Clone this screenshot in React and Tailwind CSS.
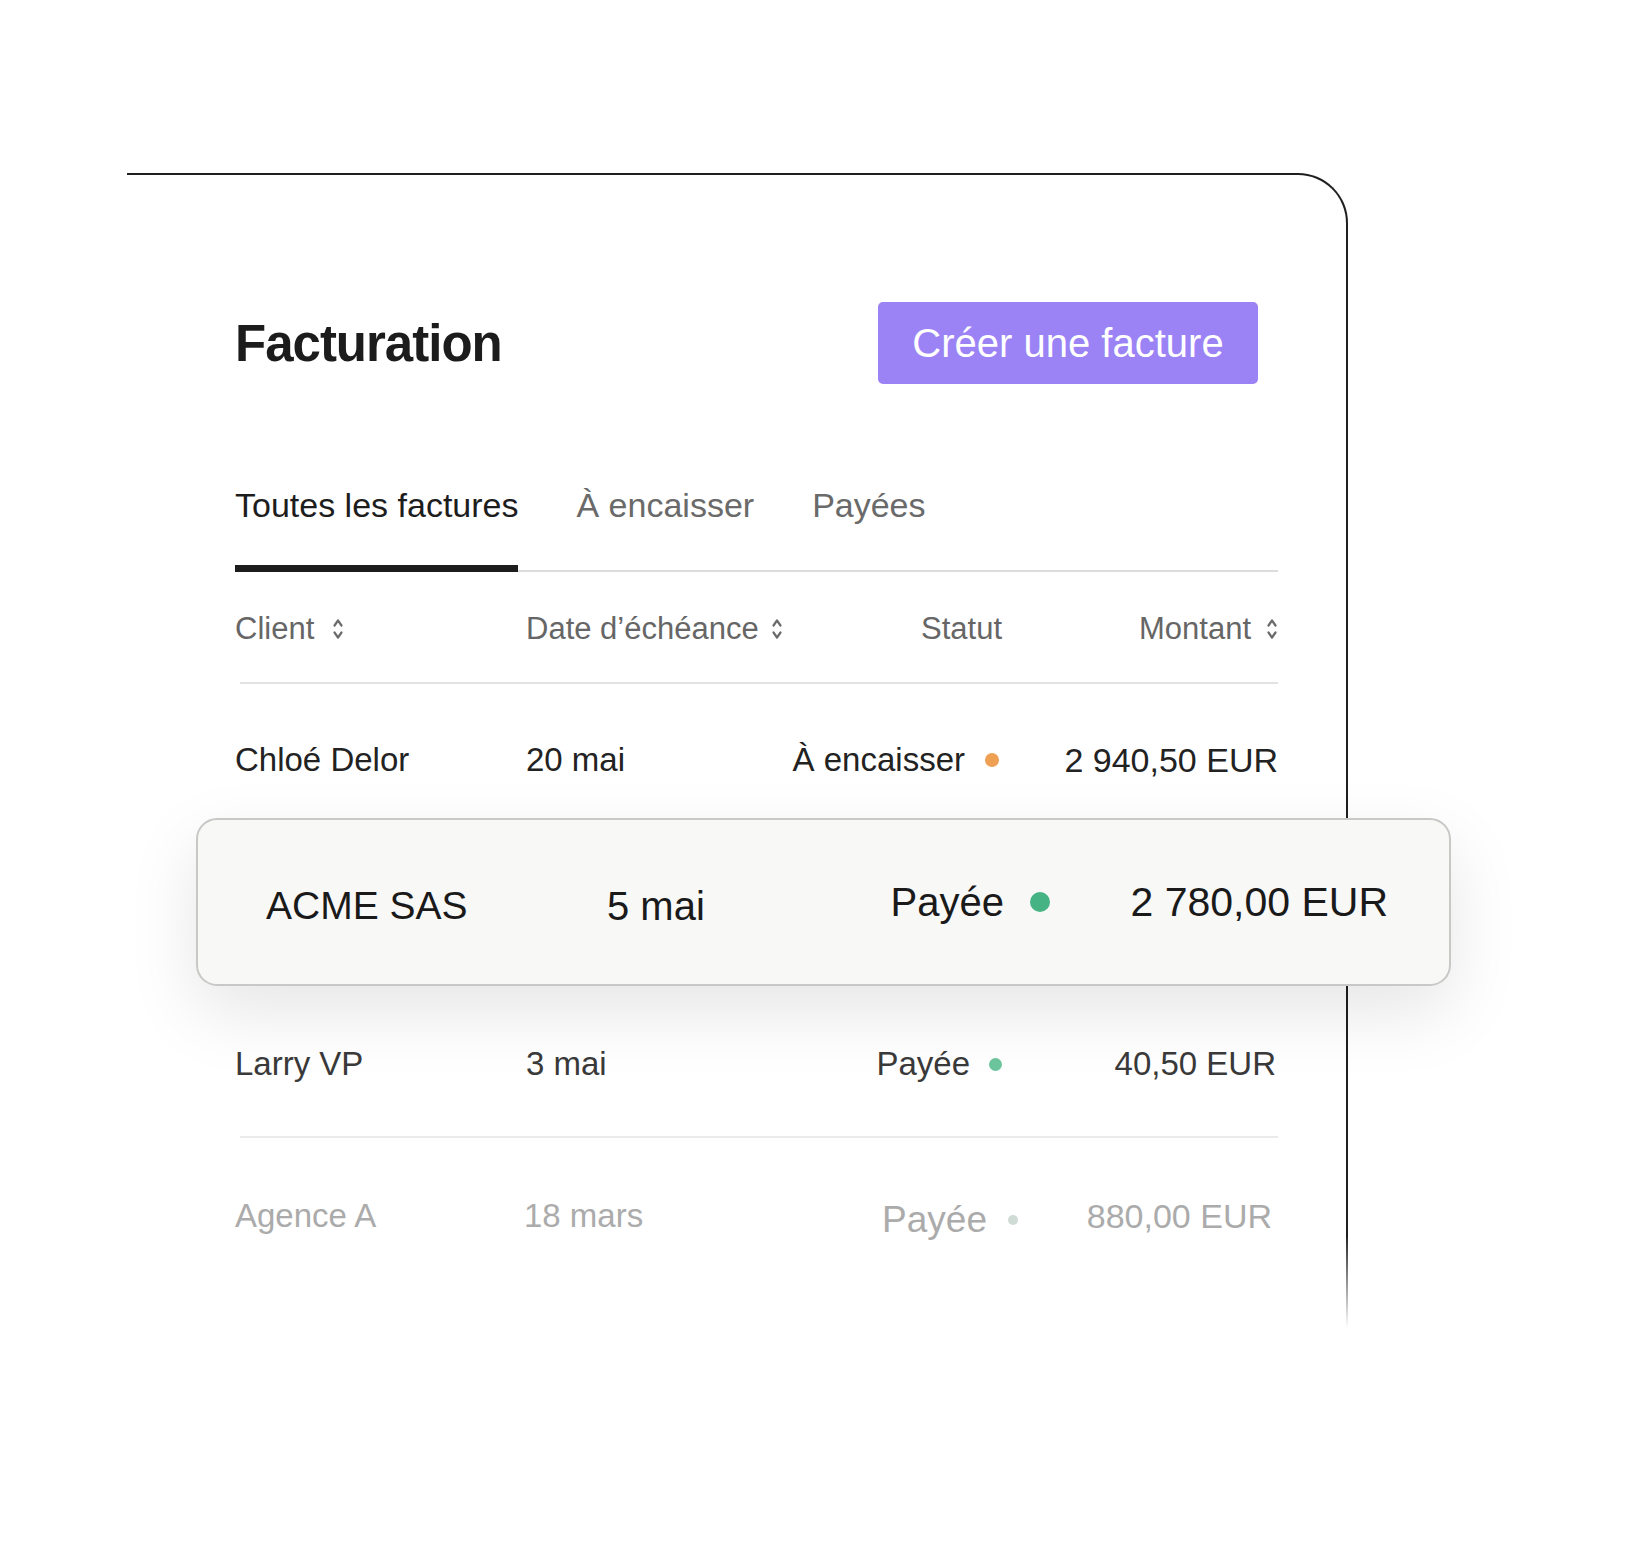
import React from "react";

function SortIcon() {
  return (
    <svg className="shrink-0" width="12" height="26" viewBox="0 0 12 26" fill="none" stroke="#6b6b6b" strokeWidth="2.2" strokeLinecap="round" strokeLinejoin="round">
      <path d="M2.5 9.5 6 4.5l3.5 5" />
      <path d="M2.5 16.5 6 21.5l3.5-5" />
    </svg>
  );
}

export default function App() {
  return (
    <div className="w-[1626px] h-[1548px] bg-white overflow-hidden font-['Liberation_Sans',Arial,sans-serif]">
      <div className="pt-[173px] pl-[127px]">
        <div className="w-[1221px] border-t-2 border-r-2 border-[#1f1f1f] rounded-tr-[50px] pl-[108px] pr-[68px]">
          {/* Title + button */}
          <div className="flex items-center justify-between pt-[127px]">
            <h1 className="text-[51px] font-bold leading-none tracking-[-1px] text-[#1c1c1c]">Facturation</h1>
            <button className="mr-[20px] w-[380px] h-[82px] rounded-[5px] bg-[#9b83f6] text-white text-[40px] leading-none flex items-center justify-center">
              Créer une facture
            </button>
          </div>

          {/* Tabs */}
          <div className="mt-[101px] flex gap-[58px] border-b-2 border-[#dcdcda] text-[34px] leading-[40px]">
            <div className="pb-[40px] border-b-[7px] border-[#1d1d1d] -mb-[2px] text-[#1d1d1d]">Toutes les factures</div>
            <div className="text-[#6a6a6a]">À encaisser</div>
            <div className="text-[#6a6a6a]">Payées</div>
          </div>

          {/* Header */}
          <div className="grid grid-cols-[291px_226px_250px_276px] items-center pt-[39px] pb-[35px] text-[31px] leading-[36px] text-[#666666]">
            <div className="flex items-center gap-[18px]">
              <span>Client</span>
              <SortIcon />
            </div>
            <div className="flex items-center gap-[12px] whitespace-nowrap">
              <span>Date d’échéance</span>
              <SortIcon />
            </div>
            <div className="flex justify-end">Statut</div>
            <div className="flex items-center justify-end gap-[15px]">
              <span>Montant</span>
              <SortIcon />
            </div>
          </div>
          <div className="h-[2px] bg-[#e2e2e0] ml-[5px]" />

          {/* Row 1 */}
          <div className="grid grid-cols-[291px_226px_250px_276px] items-center h-[152px] text-[33px] leading-[40px] text-[#222222]">
            <div>Chloé Delor</div>
            <div>20 mai</div>
            <div className="flex items-center justify-end gap-[20px] whitespace-nowrap mr-[3px]">
              <span>À encaisser</span>
              <span className="w-[14px] h-[14px] rounded-full bg-[#f0a052]" />
            </div>
            <div className="text-right whitespace-nowrap text-[34px]">2 940,50 EUR</div>
          </div>

          {/* Highlighted row */}
          <div className="relative z-10 -ml-[39px] -mr-[173px] -mt-[18px] h-[168px] rounded-[21px] border-2 border-[#c8c8c6] bg-[#f8f8f7] shadow-[0_26px_70px_rgba(0,0,0,0.10)] pl-[68px] pr-[64px] grid grid-cols-[341px_200px_245px_336px] items-center text-[40px] leading-[46px] text-[#1a1a1a]">
            <div className="mt-[8px] text-[39px] whitespace-nowrap">ACME SAS</div>
            <div className="mt-[8px]">5 mai</div>
            <div className="flex items-center justify-end gap-[26px] mr-[2px]">
              <span>Payée</span>
              <span className="w-[20px] h-[20px] rounded-full bg-[#45b384]" />
            </div>
            <div className="text-right whitespace-nowrap text-[41px]">2 780,00 EUR</div>
          </div>

          {/* Row 3 */}
          <div className="grid grid-cols-[291px_226px_250px_276px] items-center h-[150px] pt-[6px] text-[33px] leading-[40px] text-[#3a3a3a]">
            <div>Larry VP</div>
            <div>3 mai</div>
            <div className="flex items-center justify-end gap-[19px]">
              <span>Payée</span>
              <span className="w-[13px] h-[13px] rounded-full bg-[#6dc59d]" />
            </div>
            <div className="text-right whitespace-nowrap mr-[2px]">40,50 EUR</div>
          </div>
          <div className="h-[2px] bg-[#ebebea] ml-[5px]" />

          {/* Row 4 (faded) */}
          <div className="grid grid-cols-[291px_226px_250px_276px] items-center h-[100px] pt-[54px] text-[33px] leading-[40px] text-[#ababab]">
            <div>Agence A</div>
            <div className="-ml-[2px]">18 mars</div>
            <div className="flex items-center justify-end gap-[21px] -mr-[16px]">
              <span className="text-[37px] mt-[8px]">Payée</span>
              <span className="w-[10px] h-[10px] rounded-full bg-[#cfdcd5] mt-[8px]" />
            </div>
            <div className="text-right whitespace-nowrap text-[34px] mr-[6px]">880,00 EUR</div>
          </div>
        </div>
        <div className="ml-[1219px] w-[2px] h-[90px] bg-linear-to-b from-[#2a2a2a] to-[#ffffff00]" />
      </div>
    </div>
  );
}
